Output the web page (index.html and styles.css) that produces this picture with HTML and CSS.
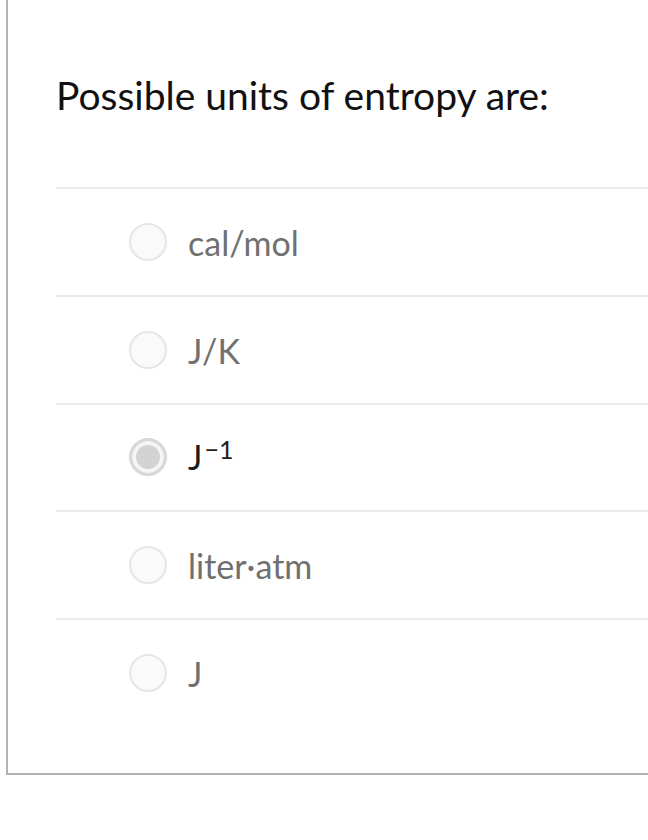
FILE: index.html
```html
<!DOCTYPE html>
<html>
<head>
<meta charset="utf-8">
<link rel="stylesheet" href="styles.css">
</head>
<body>
<div class="card">
  <div class="question">Possible units of entropy are:</div>
  <ul class="options">
    <li class="option"><span class="radio"></span><span class="label">cal/mol</span></li>
    <li class="option"><span class="radio"></span><span class="label">J/K</span></li>
    <li class="option selected"><span class="radio"></span><span class="label">J<sup>−1</sup></span></li>
    <li class="option"><span class="radio"></span><span class="label">liter·atm</span></li>
    <li class="option"><span class="radio"></span><span class="label">J</span></li>
  </ul>
</div>
</body>
</html>
```

FILE: styles.css
```css
html, body {
  margin: 0;
  padding: 0;
  background: #fff;
  overflow: hidden;
}
body {
  width: 648px;
  height: 840px;
  font-family: Lato, "Open Sans", sans-serif;
}
.card {
  margin-left: 6px;
  width: 642px;
  height: 775px;
  box-sizing: border-box;
  border-left: 2px solid #b3b3b3;
  border-bottom: 2px solid #b3b3b3;
  padding-left: 48px;
}
.question {
  box-sizing: border-box;
  height: 187px;
  padding-top: 72px;
  font-size: 39px;
  line-height: 46px;
  color: #111;
  white-space: nowrap;
}
.options {
  list-style: none;
  margin: 0;
  padding: 0;
}
.option {
  height: 105.75px;
  border-top: 2px solid #ebebeb;
  display: flex;
  align-items: center;
  padding-left: 73px;
}
.radio {
  width: 38px;
  height: 38px;
  box-sizing: border-box;
  border-radius: 50%;
  border: 2px solid #e6e6e6;
  background: #fafafa;
  flex: none;
}
.label {
  margin-left: 21px;
  font-size: 34px;
  color: #707070;
  line-height: 40px;
  padding-top: 2px;
}
.selected .radio {
  border: 3px solid #d8d8d8;
  background: #d3d3d3;
  box-shadow: inset 0 0 0 4px #f5f5f5;
}
.selected .label {
  color: #1c1c1c;
}
.label sup {
  font-size: 25px;
  vertical-align: 0;
  position: relative;
  top: -11px;
  margin-left: 2px;
}
```
